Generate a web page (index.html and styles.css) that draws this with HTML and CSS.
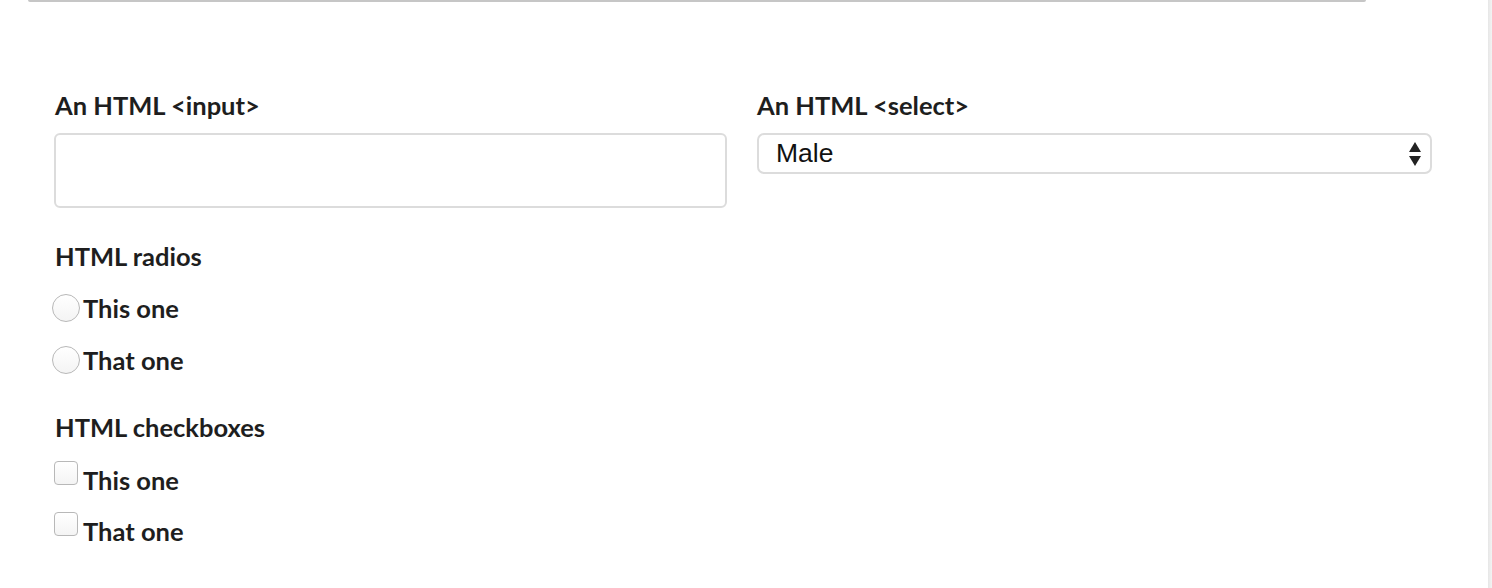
FILE: index.html
```html
<!DOCTYPE html>
<html>
<head>
<meta charset="utf-8">
<link rel="stylesheet" href="styles.css">
</head>
<body>
<div class="page">
  <div class="main">
    <div class="card-edge"></div>
    <form class="form">
      <div class="row">
        <div class="field">
          <label class="label">An HTML &lt;input&gt;</label>
          <input class="text-input" type="text">
        </div>
        <div class="field">
          <label class="label">An HTML &lt;select&gt;</label>
          <div class="select">
            <span class="select-value">Male</span>
            <svg class="select-arrows" width="14" height="26" viewBox="0 0 14 26">
              <path d="M7 1 L13 11 L1 11 Z" fill="#222"/>
              <path d="M1 15 L13 15 L7 25 Z" fill="#222"/>
            </svg>
          </div>
        </div>
      </div>
      <div class="group radios">
        <div class="label">HTML radios</div>
        <label class="option"><span class="radio"></span>This one</label>
        <label class="option"><span class="radio"></span>That one</label>
      </div>
      <div class="group checks">
        <div class="label">HTML checkboxes</div>
        <label class="option check"><span class="checkbox"></span>This one</label>
        <label class="option check"><span class="checkbox"></span>That one</label>
      </div>
    </form>
  </div>
  <div class="scroll-edge"></div>
</div>
</body>
</html>
```
FILE: styles.css
```css
html, body {
  margin: 0;
  padding: 0;
  background: #fff;
}
body {
  font-family: Lato, "Liberation Sans", sans-serif;
  color: #1e1e1e;
}
.page {
  display: flex;
  width: 1492px;
  height: 588px;
  overflow: hidden;
}
.main {
  flex: 1;
  display: flex;
  flex-direction: column;
}
.card-edge {
  margin-left: 28px;
  width: 1338px;
  height: 2px;
  background: #c6c6c6;
  border-bottom-left-radius: 3px;
  border-bottom-right-radius: 3px;
}
.form {
  padding: 0 0 0 55px;
  margin-top: 89px;
  width: 1376px;
}
.row {
  display: flex;
  gap: 30px;
}
.field {
  flex: 1;
  display: flex;
  flex-direction: column;
}
.label {
  display: block;
  font-weight: 700;
  font-size: 25.5px;
  line-height: 28px;
  height: 28px;
}
.field .label {
  margin-bottom: 14px;
}
.text-input {
  box-sizing: border-box;
  width: 673px;
  height: 75px;
  border: 2px solid #dcdcdc;
  border-radius: 6px;
  margin: 0 0 0 -1px;
  padding: 0 14px;
  outline: none;
}
.select {
  box-sizing: border-box;
  width: 675px;
  height: 41px;
  border: 2px solid #dcdcdc;
  border-radius: 7px;
  display: flex;
  align-items: center;
  justify-content: space-between;
  padding: 0 8px 0 17px;
}
.select-value {
  font-family: "Liberation Sans", Arial, sans-serif;
  font-size: 26.5px;
  color: #111;
}
.select-arrows {
  display: block;
}
.group.radios {
  margin-top: 34px;
}
.group.radios .label + .option {
  margin-top: 12px;
}
.group.checks {
  margin-top: 27px;
}
.group.checks .label + .option {
  margin-top: 13px;
}
.option {
  display: flex;
  align-items: center;
  font-weight: 700;
  font-size: 25.5px;
  height: 52px;
  margin-left: -3px;
}
.radio {
  box-sizing: border-box;
  width: 28px;
  height: 28px;
  border: 1.5px solid #b8b8b8;
  border-radius: 50%;
  background: linear-gradient(#fff, #f4f4f4);
  margin-right: 3px;
}
.option.check {
  margin-left: -1px;
  height: 51px;
}
.checkbox {
  box-sizing: border-box;
  width: 24px;
  height: 24px;
  border: 1.5px solid #b8b8b8;
  border-radius: 4px;
  background: linear-gradient(#fff, #f4f4f4);
  margin-right: 5px;
  transform: translateY(-7px);
}
.scroll-edge {
  width: 4px;
  height: 588px;
  background: linear-gradient(90deg, #e6e6e6, #f3f3f3);
}
```
